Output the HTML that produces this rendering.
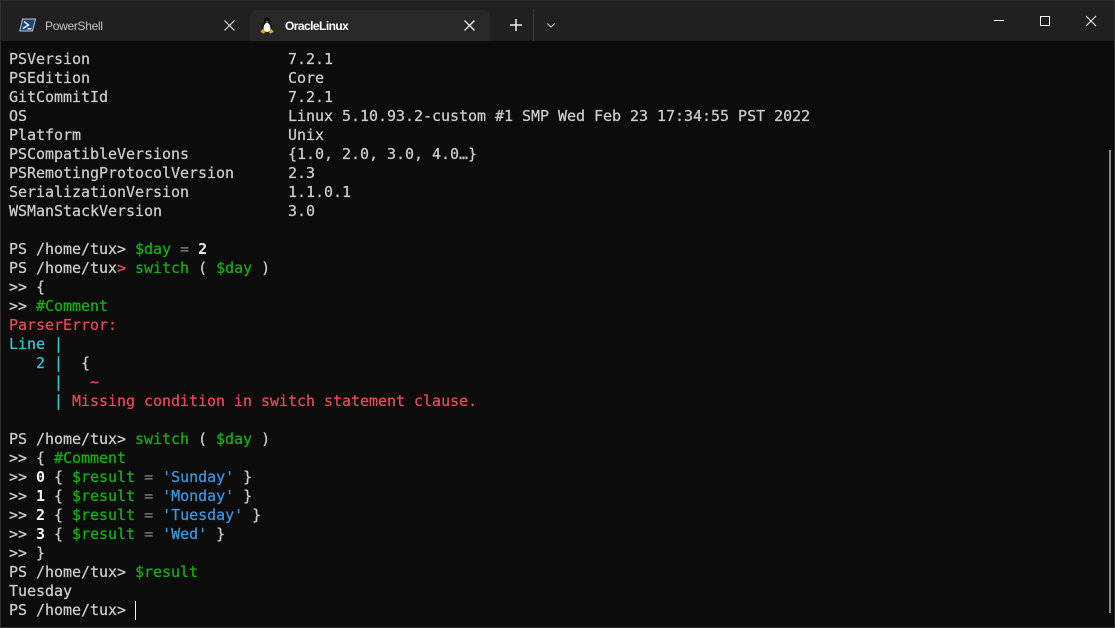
<!DOCTYPE html>
<html><head><meta charset="utf-8"><style>
html,body{margin:0;padding:0;width:1115px;height:628px;overflow:hidden;background:#0c0c0c}
#bar{position:absolute;left:0;top:0;width:1115px;height:41px;background:#202020}
#top{position:absolute;left:0;top:0;width:1115px;height:1px;background:#2c2a2a}
#t{position:absolute;left:9px;top:50px;margin:0;font:15px/19px "DejaVu Sans Mono",monospace;letter-spacing:-.03px;color:#cccccc;white-space:pre;-webkit-text-stroke:.25px}
.g{color:#13b00e}.w{color:#f2f2f2;font-weight:bold;-webkit-text-stroke:0}.r{color:#e74856}.c{color:#3ac5cf}.b{color:#3a96dd}.d{color:#767676}
.tab{position:absolute;font:12px/16px "Liberation Sans",sans-serif;white-space:nowrap}
#act{position:absolute;left:250px;top:10px;width:240px;height:31px;background:#282828;border-radius:7px 7px 0 0}
svg{position:absolute;overflow:visible}
#edgeL{position:absolute;left:0;top:0;width:1px;height:628px;background:#303030}
#edgeR{position:absolute;left:1114px;top:0;width:1px;height:628px;background:#303030}
#edgeB{position:absolute;left:0;top:627px;width:1115px;height:1px;background:#303030}
#sb{position:absolute;left:1109px;top:150px;width:2px;height:463px;background:#8a8a8a}
#cur{position:absolute;left:135px;top:601px;width:1px;height:19px;background:#f2f2f2}
</style></head><body>
<div id="bar"></div><div id="top"></div><div id="act"></div>
<svg style="left:19px;top:18px" width="17" height="15" viewBox="0 0 17 15"><path d="M3.500 1H16.500L13.500 13H.8Z" fill="#1f4578" stroke="#b4c6dc" stroke-width="1"/><path d="M5 3.500L9.500 7L4 10.500" fill="none" stroke="#fff" stroke-width="1.400"/><path d="M8.500 10.800H12.500" stroke="#fff" stroke-width="1.300"/></svg>
<div class="tab" style="left:45px;top:18px;color:#c4c4c4;letter-spacing:-.3px">PowerShell</div>
<svg style="left:224px;top:20px" width="11" height="11" viewBox="0 0 11 11"><path d="M.5.5L10.500 10.500M10.500.5L.5 10.500" stroke="#e6e6e6" stroke-width="1.100" fill="none"/></svg>
<svg style="left:260px;top:17px" width="14" height="17" viewBox="0 0 14 17"><path d="M7 .5C4.500.5 4.200 2.800 4.200 4.500 4.200 6.500 1.700 8.500 1.700 11.500 1.700 14 4 15.500 7 15.500s5.300-1.500 5.300-4C12.300 8.500 9.800 6.500 9.800 4.500 9.800 2.800 9.500.5 7 .5Z" fill="#0a0a0a"/><path d="M7 5.800C5 5.800 3.500 9 3.500 11.300 3.500 13.600 5 15 7 15s3.500-1.400 3.500-3.700C10.500 9 9 5.800 7 5.800Z" fill="#f6f6f6"/><path d="M.3 14.800L2.800 11.600 5.300 15.200 3.600 16.700ZM13.700 14.800L11.200 11.600 8.700 15.200 10.400 16.700Z" fill="#e5a50a"/><path d="M5.600 4.200H8.400L7 5.800Z" fill="#e5a50a"/></svg>
<div class="tab" style="left:285px;top:18px;color:#fff;font-weight:bold;letter-spacing:-.55px">OracleLinux</div>
<svg style="left:464px;top:20px" width="11" height="11" viewBox="0 0 11 11"><path d="M.5.5L10.500 10.500M10.500.5L.5 10.500" stroke="#f0f0f0" stroke-width="1.300" fill="none"/></svg>
<svg style="left:510px;top:19px" width="12" height="12" viewBox="0 0 12 12"><path d="M6 0V12M0 6H12" stroke="#f0f0f0" stroke-width="1.500" fill="none"/></svg>
<div style="position:absolute;left:533px;top:9px;width:1px;height:32px;background:#3a3a3a"></div>
<svg style="left:547px;top:23px" width="8" height="5" viewBox="0 0 8 5"><path d="M.3.5L4 4 7.700.5" stroke="#c8c8c8" stroke-width="1" fill="none"/></svg>
<svg style="left:994px;top:20px" width="10" height="1" viewBox="0 0 10 1"><path d="M0 .5H10" stroke="#fff" stroke-width="1"/></svg>
<svg style="left:1040px;top:16px" width="10" height="10" viewBox="0 0 10 10"><rect x=".5" y=".5" width="9" height="9" fill="none" stroke="#fff" stroke-width="1"/></svg>
<svg style="left:1086px;top:16px" width="10" height="10" viewBox="0 0 10 10"><path d="M0 0L10 10M10 0L0 10" stroke="#f0f0f0" stroke-width="1" fill="none"/></svg>
<pre id="t">PSVersion                      7.2.1
PSEdition                      Core
GitCommitId                    7.2.1
OS                             Linux 5.10.93.2-custom #1 SMP Wed Feb 23 17:34:55 PST 2022
Platform                       Unix
PSCompatibleVersions           {1.0, 2.0, 3.0, 4.0…}
PSRemotingProtocolVersion      2.3
SerializationVersion           1.1.0.1
WSManStackVersion              3.0

PS /home/tux&gt; <span class="g">$day</span> <span class="d">=</span> <span class="w">2</span>
PS /home/tux<span class="r">&gt;</span> <span class="g">switch</span> ( <span class="g">$day</span> )
&gt;&gt; {
&gt;&gt; <span class="g">#Comment</span>
<span class="r">ParserError:</span>
<span class="c">Line |</span>
<span class="c">   2 |</span>  {
<span class="c">     |</span>   <span class="r">~</span>
<span class="c">     |</span> <span class="r">Missing condition in switch statement clause.</span>

PS /home/tux&gt; <span class="g">switch</span> ( <span class="g">$day</span> )
&gt;&gt; { <span class="g">#Comment</span>
&gt;&gt; <span class="w">0</span> { <span class="g">$result</span> <span class="d">=</span> <span class="b">'Sunday'</span> }
&gt;&gt; <span class="w">1</span> { <span class="g">$result</span> <span class="d">=</span> <span class="b">'Monday'</span> }
&gt;&gt; <span class="w">2</span> { <span class="g">$result</span> <span class="d">=</span> <span class="b">'Tuesday'</span> }
&gt;&gt; <span class="w">3</span> { <span class="g">$result</span> <span class="d">=</span> <span class="b">'Wed'</span> }
&gt;&gt; }
PS /home/tux&gt; <span class="g">$result</span>
Tuesday
PS /home/tux&gt;</pre>
<div id="cur"></div><div id="sb"></div>
<div id="edgeL"></div><div id="edgeR"></div><div id="edgeB"></div>
</body></html>
